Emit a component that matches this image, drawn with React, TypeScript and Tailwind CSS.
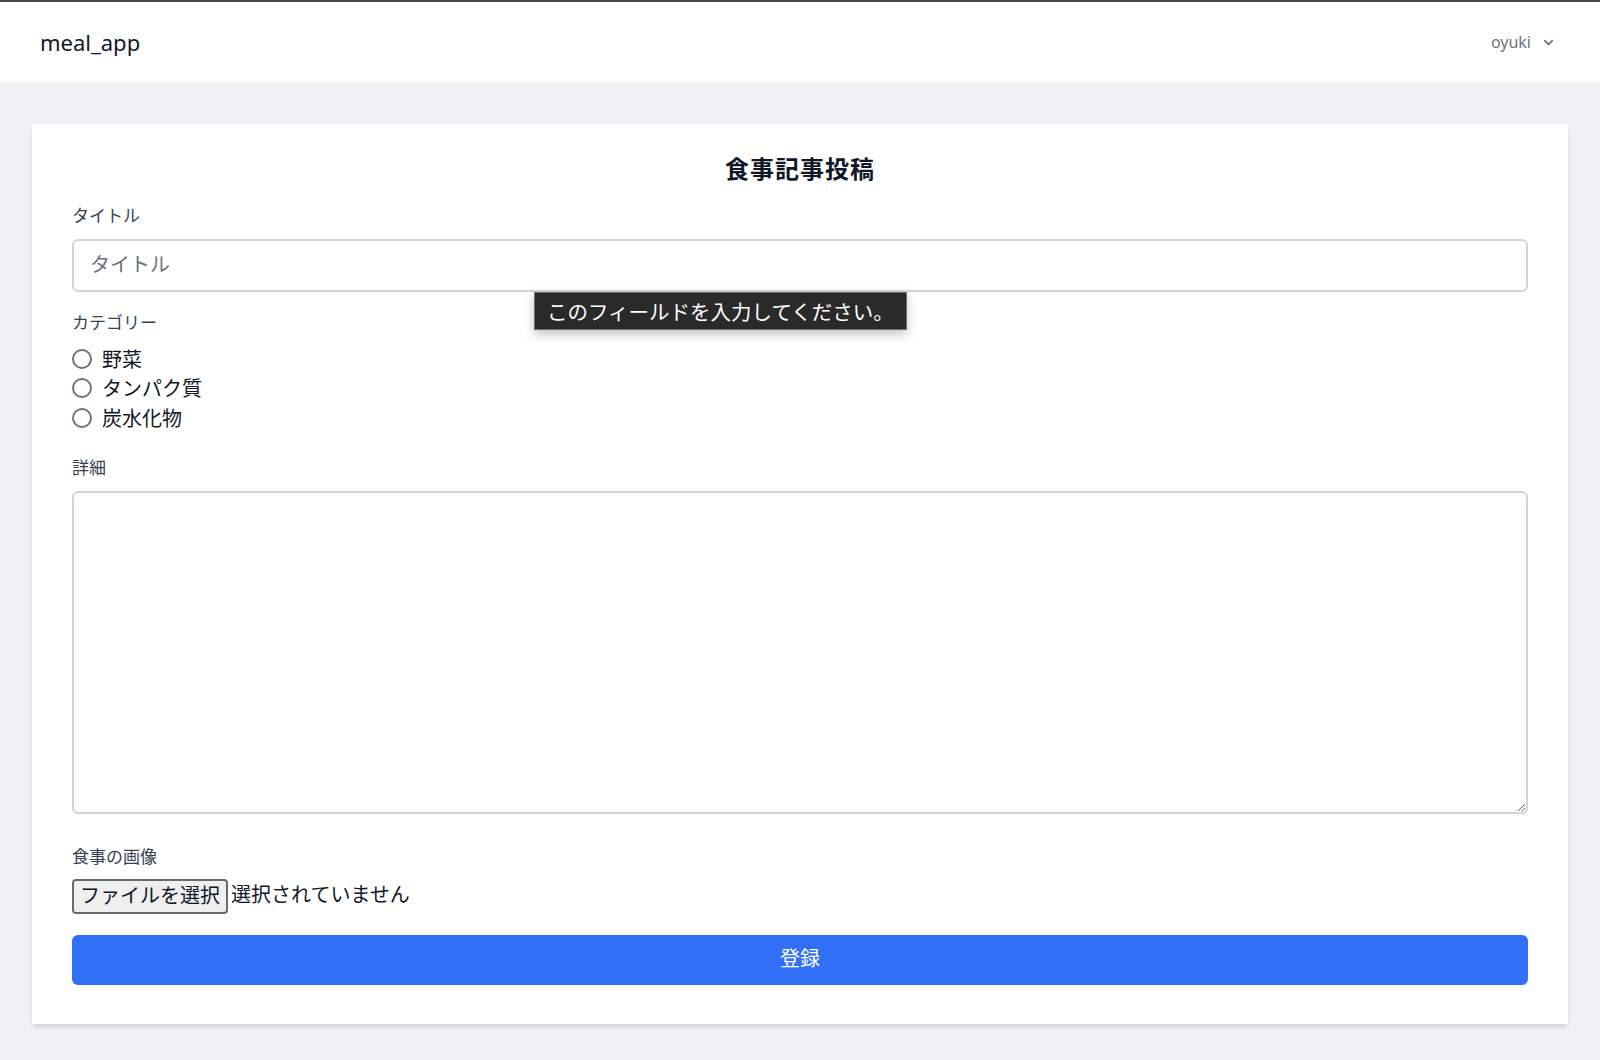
import { ChevronDown } from "lucide-react";

const categories = ["野菜", "タンパク質", "炭水化物"];

export default function App() {
  return (
    <div className="min-h-screen bg-[#f0f1f5] font-['Noto_Sans','Noto_Sans_CJK_JP',sans-serif]">
      {/* Header */}
      <header className="h-[82px] border-t-2 border-[#48484b] bg-white flex items-center justify-between pl-10 pr-[44px]">
        <span className="text-[22px] text-gray-900 pt-[1px]">meal_app</span>
        <button className="flex items-center gap-[10px] text-base text-gray-500">
          oyuki
          <ChevronDown size={15} strokeWidth={2.75} />
        </button>
      </header>

      {/* Main */}
      <main className="px-8 pt-[42px] pb-10">
        <div className="bg-white shadow-md px-10 pt-7 pb-[39px] font-['Noto_Sans_CJK_JP',sans-serif]">
          <h1 className="text-2xl font-bold text-center tracking-[1px] text-gray-900 h-8 leading-8">食事記事投稿</h1>

          {/* Title */}
          <label className="block mt-[19px] mb-3 text-[17px] leading-6 text-gray-700">タイトル</label>
          <div className="relative">
            <input
              type="text"
              placeholder="タイトル"
              className="w-full h-[53px] rounded-md border-2 border-[#d0d4dc] px-[16px] pb-[5px] text-xl placeholder:text-gray-500 outline-none"
            />
            {/* validation tooltip */}
            <div className="absolute left-[462px] top-[53px] z-10 h-[38px] flex items-center pl-[12px] pr-[12px] bg-[#2a2a2a] border border-[#6e6e6e] shadow-[0_4px_10px_rgba(0,0,0,0.25)] text-white text-[20.5px]">
              このフィールドを入力してください。
            </div>
          </div>

          {/* Category */}
          <label className="block mt-[18px] text-[17px] leading-6 text-gray-700">カテゴリー</label>
          <div className="mt-[10px] flex flex-col">
            {categories.map((c) => (
              <label key={c} className="flex items-center h-[29.5px] gap-[10px] text-xl text-gray-900">
                <input
                  type="radio"
                  name="category"
                  className="appearance-none w-[20px] h-[20px] rounded-full border-2 border-[#6b7280] bg-white"
                />
                {c}
              </label>
            ))}
          </div>

          {/* Detail */}
          <label className="block mt-[22px] mb-3 text-[17px] leading-6 text-gray-700">詳細</label>
          <textarea className="block w-full h-[323px] rounded-md border-2 border-[#d0d4dc] outline-none p-3 text-xl" />

          {/* Image */}
          <label className="block mt-[30px] mb-[11px] text-[17px] leading-6 text-gray-700">食事の画像</label>
          <div className="flex items-center text-xl text-gray-900">
            <button className="h-[35px] px-[6px] pb-[3px] bg-[#efefef] border-2 border-[#6a6a6a] rounded-[4px] leading-none">
              ファイルを選択
            </button>
            <span className="ml-[3px] pb-[4px]">選択されていません</span>
          </div>

          {/* Submit */}
          <button className="mt-[21px] w-full h-[50px] rounded-md bg-[#3170f6] text-white text-xl pb-[4px]">登録</button>
        </div>
      </main>
    </div>
  );
}
